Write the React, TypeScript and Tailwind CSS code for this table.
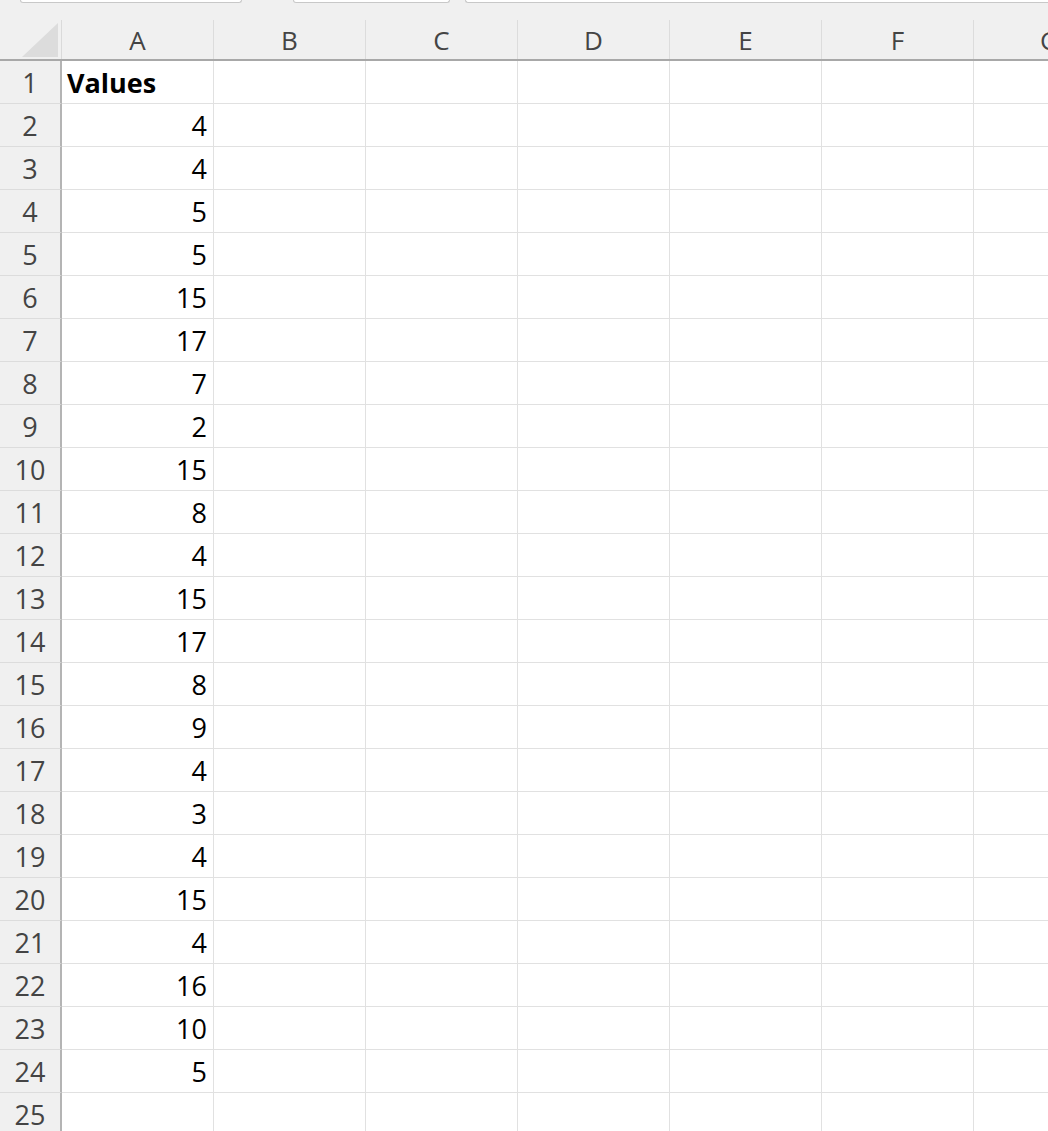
import React from 'react';

const columns = ['A', 'B', 'C', 'D', 'E', 'F', 'G'];
const values = [4, 4, 5, 5, 15, 17, 7, 2, 15, 8, 4, 15, 17, 8, 9, 4, 3, 4, 15, 4, 16, 10, 5];

export default function App() {
  const rows: { n: number; a: React.ReactNode; bold?: boolean }[] = [
    { n: 1, a: 'Values', bold: true },
    ...values.map((v, i) => ({ n: i + 2, a: v })),
    { n: 25, a: '' },
  ];

  return (
    <div className="w-[1048px] h-[1131px] overflow-hidden bg-white font-['Open_Sans','Noto_Sans',sans-serif]">
      {/* tab strip */}
      <div className="h-[20px] bg-[#f0f0f0] flex items-start">
        <div className="ml-[20px] w-[222px] h-[3px] bg-white border-b border-x border-[#c8c8c8] rounded-b-[4px]" />
        <div className="ml-[51px] w-[157px] h-[3px] bg-white border-b border-x border-[#c8c8c8] rounded-b-[4px]" />
        <div className="ml-[15px] flex-1 h-[3px] bg-white border-b border-l border-[#c8c8c8] rounded-bl-[4px]" />
      </div>

      {/* column headers */}
      <div className="flex h-[41px] bg-[#f0f0f0] border-b-[2px] border-[#a8a8a8]">
        <div className="w-[62px] shrink-0 relative border-r border-[#dadada]">
          <svg className="absolute left-[22px] top-[3px]" width="36" height="34" viewBox="0 0 36 34">
            <polygon points="36,0 36,34 0,34" fill="#dcdcdc" />
          </svg>
        </div>
        {columns.map((c) => (
          <div
            key={c}
            className="w-[152px] shrink-0 flex items-center justify-center pt-[2px] text-[26px] text-[#444] border-r border-[#dcdcdc]"
          >
            {c}
          </div>
        ))}
      </div>

      {/* rows */}
      {rows.map((r) => (
        <div key={r.n} className="flex h-[43px]">
          <div className="w-[62px] shrink-0 bg-[#f0f0f0] border-r-[2px] border-[#b4b4b4] border-b border-b-[#dcdcdc] flex items-center justify-center pt-[3px] text-[27px] text-[#444]">
            {r.n}
          </div>
          <div
            className={
              'w-[152px] shrink-0 border-r border-b border-[#e1e1e1] flex items-center pt-[3px] text-[27px] text-black ' +
              (r.bold ? 'justify-start pl-[5px] font-bold' : 'justify-end pr-[6px]')
            }
          >
            {r.a}
          </div>
          {columns.slice(1).map((c) => (
            <div key={c} className="w-[152px] shrink-0 border-r border-b border-[#e1e1e1]" />
          ))}
        </div>
      ))}
    </div>
  );
}
